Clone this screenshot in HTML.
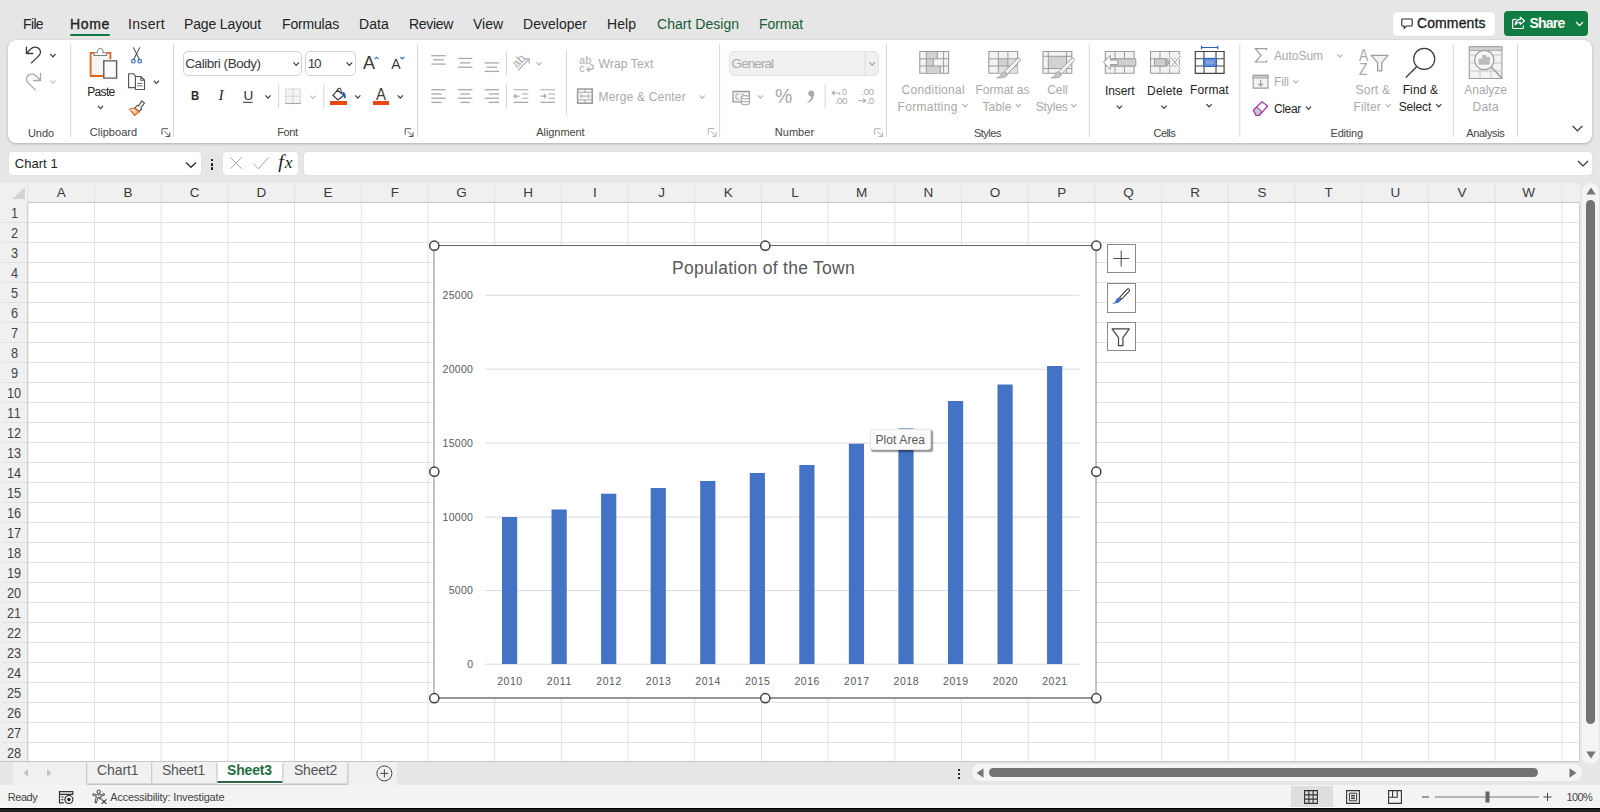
<!DOCTYPE html>
<html><head><meta charset="utf-8"><title>Excel</title>
<style>
html,body{margin:0;padding:0}
body{width:1600px;height:812px;background:#e6e6e6;position:relative;overflow:hidden;font-family:"Liberation Sans",sans-serif;}
.t{position:absolute;white-space:nowrap;}
.b{position:absolute;box-sizing:border-box;}
svg{overflow:visible}
</style></head><body>

<div class="t" style="left:23.00px;top:15.90px;font-size:14px;line-height:17px;color:#242424;letter-spacing:-0.639px;">File</div>
<div class="t" style="left:70.00px;top:15.90px;font-size:14px;line-height:17px;color:#242424;letter-spacing:0.664px;-webkit-text-stroke:0.35px #242424;">Home</div>
<div class="t" style="left:128.00px;top:15.90px;font-size:14px;line-height:17px;color:#242424;letter-spacing:0.332px;">Insert</div>
<div class="t" style="left:184.00px;top:15.90px;font-size:14px;line-height:17px;color:#242424;letter-spacing:-0.147px;">Page Layout</div>
<div class="t" style="left:282.00px;top:15.90px;font-size:14px;line-height:17px;color:#242424;letter-spacing:-0.168px;">Formulas</div>
<div class="t" style="left:359.00px;top:15.90px;font-size:14px;line-height:17px;color:#242424;letter-spacing:0.107px;">Data</div>
<div class="t" style="left:409.00px;top:15.90px;font-size:14px;line-height:17px;color:#242424;letter-spacing:-0.317px;">Review</div>
<div class="t" style="left:473.00px;top:15.90px;font-size:14px;line-height:17px;color:#242424;letter-spacing:-0.023px;">View</div>
<div class="t" style="left:523.00px;top:15.90px;font-size:14px;line-height:17px;color:#242424;letter-spacing:0.021px;">Developer</div>
<div class="t" style="left:607.00px;top:15.90px;font-size:14px;line-height:17px;color:#242424;letter-spacing:0.052px;">Help</div>
<div class="t" style="left:657.00px;top:15.90px;font-size:14px;line-height:17px;color:#185c37;letter-spacing:0.025px;">Chart Design</div>
<div class="t" style="left:759.00px;top:15.90px;font-size:14px;line-height:17px;color:#185c37;letter-spacing:-0.056px;">Format</div>
<div class="b" style="left:70px;top:34.3px;width:40px;height:2px;background:#107c41;border-radius:1px;"></div>
<div class="b" style="left:1392.5px;top:11.5px;width:102.5px;height:24px;background:#fff;border-radius:4px;box-shadow:0 0 0 0.5px #d8d8d8;"></div>
<svg class="b" style="left:1400.5px;top:17.5px;" width="14" height="13" viewBox="0 0 14 13" fill="none"><path d="M1.600 1h8.800a.8.8 0 0 1 .8.8v5.400a.8.8 0 0 1-.8.8H5.600L3.200 10.300V8H1.600a.8.8 0 0 1-.8-.8V1.800a.8.8 0 0 1 .8-.8z" stroke="#242424" stroke-width="1.1"/></svg>
<div class="t" style="left:1417.00px;top:14.80px;font-size:14px;line-height:17px;color:#1a1a1a;letter-spacing:0.103px;-webkit-text-stroke:0.3px #1a1a1a;">Comments</div>
<div class="b" style="left:1504px;top:11px;width:84.2px;height:25px;background:#107c41;border-radius:4px;"></div>
<svg class="b" style="left:1510.5px;top:16px;" width="15" height="14" viewBox="0 0 15 14" fill="none"><path d="M5.2 3.4H2.9a1.3 1.3 0 0 0-1.3 1.3v6.5a1.3 1.3 0 0 0 1.3 1.3h8.2a1.3 1.3 0 0 0 1.3-1.3V9.6" stroke="#fff" stroke-width="1.2"/><path d="M9.3 1.2l4.2 3.6-4.2 3.6V6.3C6.6 6.2 5 7.2 4.2 9c.1-3 1.9-5.300 5.100-5.600z" stroke="#fff" stroke-width="1.2" stroke-linejoin="round"/></svg>
<div class="t" style="left:1529.50px;top:15.00px;font-size:14px;line-height:17px;color:#fff;letter-spacing:-0.782px;font-weight:bold;">Share</div>
<svg class="b" style="left:1575px;top:20.5px;" width="9" height="6" viewBox="0 0 9 6" fill="none"><path d="M1 1l3.5 3.5L8 1" stroke="#fff" stroke-width="1.3"/></svg>
<div class="b" style="left:8px;top:39.5px;width:1584px;height:103px;background:#fff;border-radius:8px;box-shadow:0 1px 3px rgba(0,0,0,0.22),0 0 1px rgba(0,0,0,0.15);"></div>
<div class="t" style="left:28.00px;top:126.50px;font-size:11px;line-height:13px;color:#444;letter-spacing:-0.074px;">Undo</div>
<div class="t" style="left:87.30px;top:84.80px;font-size:12px;line-height:14px;color:#242424;letter-spacing:-0.697px;">Paste</div>
<div class="t" style="left:89.80px;top:126.20px;font-size:11px;line-height:13px;color:#444;letter-spacing:0.024px;">Clipboard</div>
<div class="b" style="left:182.8px;top:51.3px;width:119.5px;height:24.3px;border:1px solid #d1d1d1;border-radius:5px;background:#fff;"></div>
<div class="t" style="left:185.30px;top:55.80px;font-size:13.5px;line-height:16px;color:#3a3a3a;letter-spacing:-0.462px;">Calibri (Body)</div>
<div class="b" style="left:304.7px;top:51.3px;width:51.1px;height:24.3px;border:1px solid #d1d1d1;border-radius:5px;background:#fff;"></div>
<div class="t" style="left:307.80px;top:55.80px;font-size:13.5px;line-height:16px;color:#3a3a3a;letter-spacing:-1.257px;">10</div>
<div class="t" style="left:363.00px;top:51.60px;font-size:18px;line-height:22px;color:#3a3a3a;">A</div>
<div class="t" style="left:391.30px;top:55.50px;font-size:14px;line-height:17px;color:#3a3a3a;">A</div>
<div class="t" style="left:191.30px;top:87.60px;font-size:13.5px;line-height:16px;color:#2a2a2a;font-weight:bold;transform:scaleX(0.84);transform-origin:0 50%;">B</div>
<div class="t" style="left:218.50px;top:85.00px;font-size:15.5px;line-height:19px;color:#2a2a2a;"><span style="font-family:'Liberation Serif',serif;font-style:italic;">I</span></div>
<div class="t" style="left:243.60px;top:87.60px;font-size:13.5px;line-height:16px;color:#2a2a2a;">U</div>
<div class="b" style="left:330.3px;top:101px;width:16.3px;height:3.5px;background:#e8470e;"></div>
<div class="t" style="left:376.00px;top:84.50px;font-size:15.8px;line-height:19px;color:#3a3a3a;transform:scaleX(0.95);transform-origin:0 50%;">A</div>
<div class="b" style="left:372.7px;top:101px;width:16.3px;height:3.5px;background:#e8470e;"></div>
<div class="t" style="left:277.30px;top:126.00px;font-size:11px;line-height:13px;color:#444;letter-spacing:-0.402px;">Font</div>
<div class="t" style="left:511.80px;top:53.60px;font-size:12px;line-height:14px;color:#a9a9a9;transform:rotate(-45deg);transform-origin:50% 50%;">ab</div>
<div class="t" style="left:579.30px;top:53.50px;font-size:10.5px;line-height:13px;color:#a9a9a9;letter-spacing:0.411px;">ab</div>
<div class="t" style="left:579.30px;top:61.90px;font-size:10.5px;line-height:13px;color:#a9a9a9;">c</div>
<div class="t" style="left:598.50px;top:57.00px;font-size:12px;line-height:14px;color:#a9a9a9;letter-spacing:0.147px;">Wrap Text</div>
<div class="t" style="left:598.50px;top:90.20px;font-size:12px;line-height:14px;color:#a9a9a9;letter-spacing:0.193px;">Merge &amp; Center</div>
<div class="t" style="left:536.30px;top:126.00px;font-size:11px;line-height:13px;color:#444;letter-spacing:-0.068px;">Alignment</div>
<div class="b" style="left:728.8px;top:51.2px;width:150.3px;height:24.5px;border:1px solid #e3e3e3;border-radius:5px;background:#f0f0f0;"></div>
<div class="t" style="left:731.60px;top:55.80px;font-size:13.5px;line-height:16px;color:#a9a9a9;letter-spacing:-0.918px;">General</div>
<div class="t" style="left:775.00px;top:84.80px;font-size:19.5px;line-height:23px;color:#a9a9a9;">%</div>
<div class="t" style="left:842.30px;top:86.00px;font-size:9.8px;line-height:12px;color:#a9a9a9;transform:scaleX(0.9);transform-origin:0 50%;">0</div>
<div class="t" style="left:834.70px;top:94.60px;font-size:9.8px;line-height:12px;color:#a9a9a9;letter-spacing:-0.441px;">.00</div>
<div class="t" style="left:861.30px;top:86.00px;font-size:9.8px;line-height:12px;color:#a9a9a9;letter-spacing:-0.441px;">.00</div>
<div class="t" style="left:866.60px;top:94.60px;font-size:9.8px;line-height:12px;color:#a9a9a9;letter-spacing:-0.586px;">.0</div>
<div class="t" style="left:774.80px;top:126.00px;font-size:11px;line-height:13px;color:#444;letter-spacing:0.030px;">Number</div>
<div class="t" style="left:901.50px;top:82.70px;font-size:12px;line-height:14px;color:#a9a9a9;letter-spacing:0.324px;">Conditional</div>
<div class="t" style="left:897.60px;top:99.50px;font-size:12px;line-height:14px;color:#a9a9a9;letter-spacing:0.275px;">Formatting</div>
<div class="t" style="left:975.50px;top:82.70px;font-size:12px;line-height:14px;color:#a9a9a9;letter-spacing:-0.012px;">Format as</div>
<div class="t" style="left:982.50px;top:99.50px;font-size:12px;line-height:14px;color:#a9a9a9;letter-spacing:0.043px;">Table</div>
<div class="t" style="left:1047.20px;top:82.70px;font-size:12px;line-height:14px;color:#a9a9a9;letter-spacing:-0.068px;">Cell</div>
<div class="t" style="left:1035.70px;top:99.50px;font-size:12px;line-height:14px;color:#a9a9a9;letter-spacing:-0.130px;">Styles</div>
<div class="t" style="left:973.90px;top:126.50px;font-size:11px;line-height:13px;color:#444;letter-spacing:-0.476px;">Styles</div>
<div class="t" style="left:1105.00px;top:84.40px;font-size:12px;line-height:14px;color:#242424;letter-spacing:-0.102px;">Insert</div>
<div class="t" style="left:1147.10px;top:84.40px;font-size:12px;line-height:14px;color:#242424;letter-spacing:0.202px;">Delete</div>
<div class="t" style="left:1190.10px;top:82.70px;font-size:12px;line-height:14px;color:#242424;letter-spacing:0.117px;">Format</div>
<div class="t" style="left:1153.60px;top:126.50px;font-size:11px;line-height:13px;color:#444;letter-spacing:-0.590px;">Cells</div>
<div class="t" style="left:1273.90px;top:48.70px;font-size:12px;line-height:14px;color:#a9a9a9;letter-spacing:-0.022px;">AutoSum</div>
<div class="t" style="left:1273.90px;top:75.30px;font-size:12px;line-height:14px;color:#a9a9a9;letter-spacing:-0.082px;">Fill</div>
<div class="t" style="left:1273.90px;top:101.70px;font-size:12px;line-height:14px;color:#242424;letter-spacing:-0.335px;">Clear</div>
<div class="t" style="left:1358.90px;top:45.70px;font-size:15.8px;line-height:19px;color:#a8a8a8;transform:scaleX(0.88);transform-origin:0 50%;">A</div>
<div class="t" style="left:1359.20px;top:60.40px;font-size:15.8px;line-height:19px;color:#a8a8a8;transform:scaleX(0.88);transform-origin:0 50%;">Z</div>
<div class="t" style="left:1355.50px;top:82.70px;font-size:12px;line-height:14px;color:#a9a9a9;letter-spacing:0.226px;">Sort &amp;</div>
<div class="t" style="left:1353.60px;top:99.50px;font-size:12px;line-height:14px;color:#a9a9a9;letter-spacing:0.106px;">Filter</div>
<div class="t" style="left:1402.70px;top:82.70px;font-size:12px;line-height:14px;color:#242424;letter-spacing:0.103px;">Find &amp;</div>
<div class="t" style="left:1398.70px;top:99.50px;font-size:12px;line-height:14px;color:#242424;letter-spacing:-0.158px;">Select</div>
<div class="t" style="left:1330.50px;top:126.50px;font-size:11px;line-height:13px;color:#444;letter-spacing:-0.176px;">Editing</div>
<div class="t" style="left:1464.30px;top:82.70px;font-size:12px;line-height:14px;color:#a9a9a9;letter-spacing:0.001px;">Analyze</div>
<div class="t" style="left:1472.50px;top:99.50px;font-size:12px;line-height:14px;color:#a9a9a9;letter-spacing:0.238px;">Data</div>
<div class="t" style="left:1466.30px;top:126.50px;font-size:11px;line-height:13px;color:#444;letter-spacing:-0.345px;">Analysis</div>
<svg class="b" style="left:0px;top:0px;" width="1600" height="812" viewBox="0 0 1600 812" fill="none"><path d="M70.6 44.5V137" stroke="#d6d6d6" stroke-width="1" fill="none" /><path d="M173.5 44.5V137" stroke="#d6d6d6" stroke-width="1" fill="none" /><path d="M417.6 44.5V137" stroke="#d6d6d6" stroke-width="1" fill="none" /><path d="M719.6 44.5V137" stroke="#d6d6d6" stroke-width="1" fill="none" /><path d="M886.5 44.5V137" stroke="#d6d6d6" stroke-width="1" fill="none" /><path d="M1089.4 44.5V137" stroke="#d6d6d6" stroke-width="1" fill="none" /><path d="M1239.8 44.5V137" stroke="#d6d6d6" stroke-width="1" fill="none" /><path d="M1453.4 44.5V137" stroke="#d6d6d6" stroke-width="1" fill="none" /><path d="M1517.5 44.5V137" stroke="#d6d6d6" stroke-width="1" fill="none" /><path d="M26.400 47.200V53.500H32.800M26.600 53.300L30.500 49.300C32.500 47.300 35.600 46.600 38 47.900C40.600 49.300 41.200 52.600 39.600 54.900C38.800 56 36 58.600 31.600 62.800" stroke="#3a3a3a" stroke-width="1.3" fill="none" stroke-linecap="round" stroke-linejoin="round"/><path d="M50.30 54.00L52.90 56.80L55.50 54.00" stroke="#3a3a3a" stroke-width="1.15" fill="none" /><path d="M40.500 73.500V80.500H33.600M40.300 80.300L36.400 76.300C34.400 74.300 31.300 73.600 28.900 74.900C26.300 76.300 25.700 79.600 27.300 81.900C28.100 83 30.900 85.600 35.300 89.800" stroke="#a8a8a8" stroke-width="1.3" fill="none" stroke-linecap="round" stroke-linejoin="round"/><path d="M50.30 80.40L52.90 83.20L55.50 80.40" stroke="#c4c4c4" stroke-width="1.15" fill="none" /><path d="M90.600 53.200h19.600v22.700h-19.600z" stroke="none" stroke-width="0" fill="#f5f5f5" /><path d="M94 52.900h-3.400v23.100h12.400" stroke="#e8641b" stroke-width="1.8" fill="none" /><path d="M107 52.900h3.400v6.300" stroke="#e8641b" stroke-width="1.8" fill="none" /><path d="M94 55.500v-2.700h3.400c0-2.300 1.200-4.500 2.900-4.500s2.900 2.200 2.900 4.500h3.400v2.700z" stroke="#808080" stroke-width="1.1" fill="#fff" /><path d="M103.800 60.900h12.800v17.200h-12.800z" stroke="#5a5a5a" stroke-width="1.4" fill="#fafafa" /><path d="M97.90 105.80L100.50 108.60L103.10 105.80" stroke="#3a3a3a" stroke-width="1.15" fill="none" /><path d="M133.300 47.300l6 12M139.800 47.300l-6 12" stroke="#3a3a3a" stroke-width="1" fill="none" /><circle cx="133.400" cy="61.200" r="1.800" stroke="#3366cc" stroke-width="1.2" fill="none"/><circle cx="139.700" cy="61.200" r="1.800" stroke="#3366cc" stroke-width="1.2" fill="none"/><path d="M135 87.600h-6.400v-13.800h5l2 2" stroke="#555" stroke-width="1.15" fill="none" /><path d="M135.400 76.500h5.500l3.600 3.600v9.400h-9.100zM140.800 76.600v3.600h3.600" stroke="#555" stroke-width="1.15" fill="#fff" /><path d="M137.300 83.400h5.200M137.300 85.800h5.200" stroke="#555" stroke-width="0.9" fill="none" /><path d="M153.80 80.70L156.40 83.50L159.00 80.70" stroke="#3a3a3a" stroke-width="1.15" fill="none" /><path d="M141.800 100.900l2.700 2.300-3.700 4.500 .9 1.300-2.600 2.700-4.300-3.700 2.500-2.700 1.300.600z" stroke="#4d4d4d" stroke-width="1.1" fill="#fff" stroke-linejoin="round"/><path d="M134.600 108.200l4.400 3.800-4.400 3.300-5-6.200z" stroke="#e8641b" stroke-width="1.2" fill="#f0c9a0" stroke-linejoin="round"/><path d="M130.500 109.400c1.500 1 3 .2 4.500 1.300" stroke="#fff" stroke-width="1" fill="none" /><path d="M162 134.7V128.7H168" stroke="#555" stroke-width="1" fill="none" /><path d="M164.6 131.29999999999998L169.6 136.29999999999998M169.8 132.29999999999998V136.5H165.6" stroke="#555" stroke-width="1" fill="none" /><path d="M293.40 62.40L296.20 65.40L299.00 62.40" stroke="#3a3a3a" stroke-width="1.15" fill="none" /><path d="M346.60 62.40L349.40 65.40L352.20 62.40" stroke="#3a3a3a" stroke-width="1.15" fill="none" /><path d="M374.700 59.200l1.900-2 1.900 2" stroke="#2b6fc9" stroke-width="1.1" fill="none" /><path d="M400.500 57l1.900 2 1.900-2" stroke="#2b6fc9" stroke-width="1.1" fill="none" /><path d="M243.200 102.300h9.400" stroke="#2a2a2a" stroke-width="1" fill="none" /><path d="M265.40 95.30L268.00 98.10L270.60 95.30" stroke="#3a3a3a" stroke-width="1.15" fill="none" /><path d="M278.600 84.500v24.300M323.800 84.500v24.300M506.400 51.300v24.300M506.400 84.300v24.700M566.500 50.500v64.500M825.200 84.500v24.300" stroke="#d6d6d6" stroke-width="1" fill="none" /><path d="M285.700 88.900h14.600v14.600H285.700z" stroke="#b4b4b4" stroke-width="1" fill="#f5f5f5" stroke-dasharray="1 1"/><path d="M285.200 103.500h15.600" stroke="#a8a8a8" stroke-width="1.1" fill="none" /><path d="M293 88.900v14.600M285.700 96.200h14.600" stroke="#c0c0c0" stroke-width="1" fill="none" stroke-dasharray="1.5 1"/><path d="M310.40 95.60L313.00 98.40L315.60 95.60" stroke="#c0c0c0" stroke-width="1.15" fill="none" /><path d="M337.300 90.300L344 95.300L337.800 99.900L332.900 95.300Z" stroke="#3a3a3a" stroke-width="1.2" fill="#fff" stroke-linejoin="round"/><path d="M337.100 91.800C336.900 89.300 338.300 88.100 339.500 88.300C341 88.600 341.200 90.500 341.200 93" stroke="#3a3a3a" stroke-width="1.1" fill="none" /><path d="M342.500 92.300C344.600 92.900 345 95.400 344.800 98.100" stroke="#1a5fd0" stroke-width="1.9" fill="none" /><path d="M355.20 95.30L357.80 98.10L360.40 95.30" stroke="#3a3a3a" stroke-width="1.15" fill="none" /><path d="M397.70 95.30L400.30 98.10L402.90 95.30" stroke="#3a3a3a" stroke-width="1.15" fill="none" /><path d="M405.2 134.7V128.7H411.2" stroke="#555" stroke-width="1" fill="none" /><path d="M407.8 131.29999999999998L412.8 136.29999999999998M413.0 132.29999999999998V136.5H408.8" stroke="#555" stroke-width="1" fill="none" /><path d="M431.30 55.7h14.4" stroke="#a9a9a9" stroke-width="1.3" fill="none" /><path d="M433.20 59.8h10.6" stroke="#a9a9a9" stroke-width="1.3" fill="none" /><path d="M431.30 64.1h14.4" stroke="#a9a9a9" stroke-width="1.3" fill="none" /><path d="M458.00 58.4h14.4" stroke="#a9a9a9" stroke-width="1.3" fill="none" /><path d="M459.90 62.9h10.6" stroke="#a9a9a9" stroke-width="1.3" fill="none" /><path d="M458.00 67.2h14.4" stroke="#a9a9a9" stroke-width="1.3" fill="none" /><path d="M484.70 62.9h14.4" stroke="#a9a9a9" stroke-width="1.3" fill="none" /><path d="M486.60 67.2h10.6" stroke="#a9a9a9" stroke-width="1.3" fill="none" /><path d="M484.70 71.4h14.4" stroke="#a9a9a9" stroke-width="1.3" fill="none" /><path d="M431.30 89.7h14.4" stroke="#a9a9a9" stroke-width="1.3" fill="none" /><path d="M431.30 94h10.4" stroke="#a9a9a9" stroke-width="1.3" fill="none" /><path d="M431.30 98.2h14.4" stroke="#a9a9a9" stroke-width="1.3" fill="none" /><path d="M431.30 102.4h10.4" stroke="#a9a9a9" stroke-width="1.3" fill="none" /><path d="M458.00 89.7h14.4" stroke="#a9a9a9" stroke-width="1.3" fill="none" /><path d="M460.50 94h9.4" stroke="#a9a9a9" stroke-width="1.3" fill="none" /><path d="M458.00 98.2h14.4" stroke="#a9a9a9" stroke-width="1.3" fill="none" /><path d="M460.50 102.4h9.4" stroke="#a9a9a9" stroke-width="1.3" fill="none" /><path d="M484.70 89.7h14.4" stroke="#a9a9a9" stroke-width="1.3" fill="none" /><path d="M488.70 94h10.4" stroke="#a9a9a9" stroke-width="1.3" fill="none" /><path d="M484.70 98.2h14.4" stroke="#a9a9a9" stroke-width="1.3" fill="none" /><path d="M488.70 102.4h10.4" stroke="#a9a9a9" stroke-width="1.3" fill="none" /><path d="M518 70.300l11-11.200M524.600 58.900h4.600v4.600" stroke="#a9a9a9" stroke-width="1.1" fill="none" /><path d="M536.40 62.10L539.00 64.90L541.60 62.10" stroke="#b8b8b8" stroke-width="1.15" fill="none" /><path d="M513.800 89.700h14.600M513.800 102.400h14.600M521.800 94h6.600M521.800 98.200h6.600" stroke="#a9a9a9" stroke-width="1.1" fill="none" /><path d="M519.400 96.100h-5.400M516.300 93.800l-2.400 2.300 2.400 2.300" stroke="#a9a9a9" stroke-width="1.1" fill="none" /><path d="M540.400 89.700h14.600M540.400 102.400h14.600M548.400 94h6.600M548.400 98.200h6.600" stroke="#a9a9a9" stroke-width="1.1" fill="none" /><path d="M540.600 96.100h5.400M543.700 93.800l2.400 2.300-2.400 2.300" stroke="#a9a9a9" stroke-width="1.1" fill="none" /><path d="M587.200 69.400h3.800a2.300 2.300 0 0 0 0-4.600h-1M589.400 67.200l-2.300 2.200 2.300 2.200" stroke="#a9a9a9" stroke-width="1.1" fill="none" /><path d="M577.600 88.900h14.600v14.400H577.600z" stroke="#9a9a9a" stroke-width="1.5" fill="#f7f7f7" /><path d="M577.600 92.300h14.600M577.600 99.900h14.600M584.900 88.900v3.400M584.900 99.900v3.400" stroke="#a9a9a9" stroke-width="1" fill="none" /><path d="M580 96.100h9.800M582 94.300l-1.900 1.800 1.900 1.800M587.800 94.300l1.900 1.800-1.900 1.800" stroke="#a9a9a9" stroke-width="1" fill="none" /><path d="M699.60 95.50L702.20 98.30L704.80 95.50" stroke="#b8b8b8" stroke-width="1.15" fill="none" /><path d="M708.3 134.5V128.5H714.3" stroke="#b4b4b4" stroke-width="1" fill="none" /><path d="M710.9 131.1L715.9 136.1M716.0999999999999 132.1V136.3H711.9" stroke="#b4b4b4" stroke-width="1" fill="none" /><path d="M865.200 52v23" stroke="#dcdcdc" stroke-width="1" fill="none" /><path d="M869.40 62.20L872.20 65.20L875.00 62.20" stroke="#a0a0a0" stroke-width="1.15" fill="none" /><path d="M733 91.500h16.300v10.300h-16.300z" stroke="#9c9c9c" stroke-width="1.3" fill="#f6f6f6" /><path d="M739.300 94h-1.800a1.500 1.500 0 0 0-1.500 1.500v2.200a1.500 1.500 0 0 0 1.500 1.500h1.800M741.500 94.200h2.600" stroke="#a9a9a9" stroke-width="1.1" fill="none" /><path d="M741.300 97.400v5.600c0 .900 1.800 1.700 4.100 1.700s4.100-.800 4.100-1.700v-5.600z" stroke="none" stroke-width="0" fill="#fff" /><ellipse cx="745.400" cy="97.300" rx="4.100" ry="1.700" stroke="#a9a9a9" stroke-width="1.100" fill="#fff"/><path d="M741.300 97.300v5.700c0 .900 1.800 1.700 4.100 1.700s4.100-.800 4.100-1.700v-5.700M741.300 100.200c0 .900 1.800 1.700 4.100 1.700s4.100-.800 4.100-1.700" stroke="#a9a9a9" stroke-width="1.1" fill="none" /><path d="M757.90 95.40L760.50 98.20L763.10 95.40" stroke="#b8b8b8" stroke-width="1.15" fill="none" /><circle cx="811.200" cy="93.500" r="2.900" fill="#a9a9a9"/><path d="M814.100 93.500C814.100 98 811.600 101.500 807.700 103L807.300 102.300C809.900 100.800 811.100 98.600 811.200 96.300Z" stroke="none" stroke-width="0" fill="#a9a9a9" /><path d="M839.800 95v-2h-7.600M834.500 90.800l-2.400 2.200 2.400 2.200" stroke="#a9a9a9" stroke-width="1.1" fill="none" /><path d="M858 100.700h7.600M863.200 98.500l2.400 2.200-2.400 2.200" stroke="#a9a9a9" stroke-width="1.1" fill="none" /><path d="M874.7 134.7V128.7H880.7" stroke="#b4b4b4" stroke-width="1" fill="none" /><path d="M877.3000000000001 131.29999999999998L882.3000000000001 136.29999999999998M882.5 132.29999999999998V136.5H878.3000000000001" stroke="#b4b4b4" stroke-width="1" fill="none" /><path d="M919.800 51.500h28.800v21.800h-28.800z" stroke="#9c9c9c" stroke-width="1.1" fill="#f3f3f3" /><path d="M926.300 52h11v7h-11zM926.300 59h7v7h-7zM926.300 66h14v7h-14z" stroke="none" stroke-width="0" fill="#d2d2d2" /><path d="M926.300 51.500v21.800M919.800 58.800h28.800M919.800 66h28.800M937.300 51.500v7.300M933.300 58.800v7.200M940.300 66v7.300M943.600 51.500v21.800" stroke="#9c9c9c" stroke-width="1" fill="none" /><path d="M962.50 104.20L965.10 107.00L967.70 104.20" stroke="#b0b0b0" stroke-width="1.15" fill="none" /><path d="M988.800 51.500h28.800v21.800h-28.800z" stroke="#9c9c9c" stroke-width="1.1" fill="#f3f3f3" /><path d="M998.300 58.800h19.300v14.500h-19.300z" stroke="none" stroke-width="0" fill="#dedede" /><path d="M998.300 58.800h9.600v7.200h-9.600z" stroke="none" stroke-width="0" fill="#d2d2d2" /><path d="M988.800 58.800h28.800M988.800 66h28.800M998.300 51.500v21.800M1007.900 51.500v21.800" stroke="#9c9c9c" stroke-width="1" fill="none" /><path d="M1019.6 58.400c.9.600 1 1.600.400 2.400L1007.4 74l-2.800-2.400L1017.2 58.700c.700-.700 1.600-.800 2.400-.300z" stroke="#9c9c9c" stroke-width="1" fill="#f4f4f4" stroke-linejoin="round"/><path d="M1004.2 71.900l3.100 2.600c-.200 2.200-3.600 3.900-10.800 3.400 2.600-.800 3.600-2 4.300-3.400.800-1.600 1.900-2.700 3.400-2.600z" stroke="#a4a4a4" stroke-width="0.8" fill="#c4c4c4" stroke-linejoin="round"/><path d="M1015.70 104.20L1018.30 107.00L1020.90 104.20" stroke="#b0b0b0" stroke-width="1.15" fill="none" /><path d="M1043 51.500h28.800v21.800h-28.800z" stroke="#9c9c9c" stroke-width="1.1" fill="#f3f3f3" /><path d="M1048.300 56.300h18.300v12.200h-18.300z" stroke="none" stroke-width="0" fill="#d2d2d2" /><path d="M1043 56.300h28.800M1043 68.500h28.800M1048.300 51.500v21.800M1066.600 51.500v21.800" stroke="#9c9c9c" stroke-width="1" fill="none" /><path d="M1073.8 58.400c.9.600 1 1.600.400 2.400L1061.6 74l-2.800-2.400L1071.4 58.700c.700-.700 1.600-.800 2.400-.300z" stroke="#9c9c9c" stroke-width="1" fill="#f4f4f4" stroke-linejoin="round"/><path d="M1058.4 71.900l3.100 2.600c-.200 2.200-3.600 3.900-10.800 3.400 2.600-.800 3.600-2 4.300-3.400.800-1.600 1.900-2.700 3.400-2.600z" stroke="#a4a4a4" stroke-width="0.8" fill="#c4c4c4" stroke-linejoin="round"/><path d="M1071.20 104.20L1073.80 107.00L1076.40 104.20" stroke="#b0b0b0" stroke-width="1.15" fill="none" /><path d="M1105.300 51.500h28.800v21.800h-28.800z" stroke="#9c9c9c" stroke-width="1.1" fill="#f3f3f3" /><path d="M1105.300 58.800h28.800M1105.300 66h28.800M1115 51.500v21.800M1124.500 51.500v21.800" stroke="#9c9c9c" stroke-width="1" fill="none" /><path d="M1112 58.800h23.800v7.200h-23.800z" stroke="#9c9c9c" stroke-width="1" fill="#cfcfcf" /><path d="M1110.400 55.300l-6.900 7 6.900 7v-4.800h7.400v-4.400h-7.400z" stroke="#9c9c9c" stroke-width="1" fill="#fafafa" stroke-linejoin="round"/><path d="M1116.80 105.70L1119.40 108.50L1122.00 105.70" stroke="#3a3a3a" stroke-width="1.15" fill="none" /><path d="M1150.500 51.500h28.800v21.800h-28.800z" stroke="#9c9c9c" stroke-width="1.1" fill="#f3f3f3" /><path d="M1150.500 58.800h28.800M1150.500 66h28.800M1160 51.500v21.800M1169.600 51.500v21.800" stroke="#9c9c9c" stroke-width="1" fill="none" /><path d="M1154.500 58.800h11.500v7.200h-11.500z" stroke="#9c9c9c" stroke-width="1" fill="#cfcfcf" /><path d="M1166 59.300l4 3.100-4 3.100z" stroke="#9c9c9c" stroke-width="1" fill="#bdbdbd" /><path d="M1169 55.600l11.600 13.400M1180.600 55.600l-11.600 13.400" stroke="#fff" stroke-width="3.2" fill="none" /><path d="M1169 55.600l11.600 13.400M1180.600 55.600l-11.600 13.400" stroke="#b0b0b0" stroke-width="1.1" fill="none" /><path d="M1161.40 105.70L1164.00 108.50L1166.60 105.70" stroke="#3a3a3a" stroke-width="1.15" fill="none" /><path d="M1195.300 51.500h28.800v21.800h-28.800z" stroke="#444" stroke-width="1.2" fill="#fff" /><path d="M1195.300 58.800h28.800M1195.300 66h28.800M1204 51.500v21.800M1216 51.500v21.800" stroke="#444" stroke-width="1.1" fill="none" /><path d="M1203.500 58.300h13v8.200h-13z" stroke="#2f62b5" stroke-width="1" fill="#5b8bd8" /><path d="M1206.500 61h7v2.800h-7z" stroke="#8fb0e6" stroke-width="0.8" fill="#7ea3e0" /><path d="M1201.500 47.500h16.300M1201.500 45.800v3.400M1217.800 45.800v3.400" stroke="#2b5fc0" stroke-width="1.2" fill="none" /><path d="M1206.50 104.20L1209.10 107.00L1211.70 104.20" stroke="#3a3a3a" stroke-width="1.15" fill="none" /><path d="M1266.600 50.300v-1.700h-11.200l5.700 6.700-5.700 6.700h11.200v-1.700" stroke="#9c9c9c" stroke-width="1.2" fill="none" stroke-linejoin="miter"/><path d="M1337.20 54.40L1339.80 57.20L1342.40 54.40" stroke="#b8b8b8" stroke-width="1.15" fill="none" /><path d="M1253.200 75.300h14.800v12.800h-14.800z" stroke="#9c9c9c" stroke-width="1.1" fill="#f3f3f3" /><path d="M1253.200 75.300h14.800v2.600h-14.800z" stroke="#9c9c9c" stroke-width="1" fill="#d2d2d2" /><path d="M1260.600 79.800v6M1258.200 83.600l2.400 2.400 2.400-2.400" stroke="#9c9c9c" stroke-width="1.1" fill="none" /><path d="M1293.20 80.40L1295.80 83.20L1298.40 80.40" stroke="#b8b8b8" stroke-width="1.15" fill="none" /><path d="M1253.400 110.200l8.600-8.500 5.700 4.300-8.300 9.400-3.300.1z" stroke="#a436ab" stroke-width="1.2" fill="#fff" stroke-linejoin="round"/><path d="M1253.400 110.200l3.200-3.100 5.400 4.500-3 3.400-2.900.2z" stroke="#a436ab" stroke-width="1.1" fill="#c9c9c9" stroke-linejoin="round"/><path d="M1305.90 106.60L1308.50 109.40L1311.10 106.60" stroke="#3a3a3a" stroke-width="1.15" fill="none" /><path d="M1371.300 55.300h16.800l-6.300 7.300v8.200h-4.200v-8.200z" stroke="#9c9c9c" stroke-width="1.2" fill="#f3f3f3" stroke-linejoin="round"/><path d="M1385.70 104.20L1388.30 107.00L1390.90 104.20" stroke="#b8b8b8" stroke-width="1.15" fill="none" /><circle cx="1424.200" cy="58.900" r="10.500" stroke="#3a3a3a" stroke-width="1.200" fill="none"/><path d="M1416.600 66.700l-10.800 10.800" stroke="#3a3a3a" stroke-width="1.3" fill="none" /><path d="M1436.10 104.20L1438.70 107.00L1441.30 104.20" stroke="#3a3a3a" stroke-width="1.15" fill="none" /><path d="M1469.300 46.800h32.600v31.700h-32.600z" stroke="#9c9c9c" stroke-width="1.1" fill="#f3f3f3" /><path d="M1469.300 46.800h32.600v3.600h-32.600z" stroke="#9c9c9c" stroke-width="0.8" fill="#d2d2d2" /><path d="M1469.300 55h32.600M1469.300 63h32.600M1469.300 71h32.600M1480 50.400v28.100M1491 50.400v28.100" stroke="#c8c8c8" stroke-width="1" fill="none" /><circle cx="1484.300" cy="60" r="9.700" stroke="#9c9c9c" stroke-width="1.200" fill="#f6f6f6"/><path d="M1479 64.300v-5.300h3.300v5.300zM1482.600 64.300v-9h3.300v9zM1486.200 64.300v-7h3.300v7z" stroke="#b0b0b0" stroke-width="0.6" fill="#bdbdbd" /><path d="M1491.400 67l10.500 11.300" stroke="#9c9c9c" stroke-width="1.4" fill="none" /><path d="M1572.75 126.00L1577.50 130.80L1582.25 126.00" stroke="#3a3a3a" stroke-width="1.2" fill="none" /></svg>
<div class="b" style="left:9px;top:152px;width:192px;height:23px;background:#fff;border-radius:4px;box-shadow:0 0 0 0.5px #dedede;"></div>
<div class="t" style="left:14.70px;top:155.80px;font-size:13px;line-height:16px;color:#242424;letter-spacing:0.053px;">Chart 1</div>
<svg class="b" style="left:184.8px;top:161.4px;" width="12" height="7" viewBox="0 0 12 7" fill="none"><path d="M1 1.500l5 4.800 5-4.800" stroke="#2a2a2a" stroke-width="1.2"/></svg>
<div class="b" style="left:210.6px;top:158.60000000000002px;width:2.5px;height:2.5px;background:#1a1a1a;border-radius:0.6px;"></div>
<div class="b" style="left:210.6px;top:163.0px;width:2.5px;height:2.5px;background:#1a1a1a;border-radius:0.6px;"></div>
<div class="b" style="left:210.6px;top:167.4px;width:2.5px;height:2.5px;background:#1a1a1a;border-radius:0.6px;"></div>
<div class="b" style="left:223.3px;top:152px;width:75px;height:23px;background:#fff;border-radius:4px;box-shadow:0 0 0 0.5px #dedede;"></div>
<svg class="b" style="left:229.8px;top:157.2px;" width="12.2" height="12.2" viewBox="0 0 12.2 12.2" fill="none"><path d="M0.400 0.400l11.400 11.400M11.800 0.400L0.400 11.800" stroke="#a6a6a6" stroke-width="1"/></svg>
<svg class="b" style="left:253px;top:157px;" width="16" height="12" viewBox="0 0 16 12" fill="none"><path d="M0.400 6.800l5 5L15.600 0.400" stroke="#a6a6a6" stroke-width="1"/></svg>
<div class="t" style="left:278.30px;top:150.30px;font-size:19.5px;line-height:23px;color:#1a1a1a;"><span style="font-family:'Liberation Serif',serif;font-style:italic;">f</span><span style="font-family:'Liberation Serif',serif;font-style:italic;font-size:17.5px;margin-left:1px">x</span></div>
<div class="b" style="left:304px;top:152px;width:1287.5px;height:23px;background:#fff;border-radius:4px;box-shadow:0 0 0 0.5px #dedede;"></div>
<svg class="b" style="left:1577px;top:159.5px;" width="12" height="7" viewBox="0 0 12 7" fill="none"><path d="M1 1l5 5 5-5" stroke="#333" stroke-width="1.2"/></svg>
<div class="b" style="left:0px;top:182.5px;width:1579.5px;height:20px;background:#f0f0f0;"></div>
<div class="b" style="left:0px;top:182.5px;width:27.75px;height:579.0px;background:#f0f0f0;"></div>
<div class="b" style="left:27.75px;top:202.5px;width:1551.75px;height:559.0px;background:#fff;"></div>
<svg class="b" style="left:0px;top:0px;" width="1600" height="812" viewBox="0 0 1600 812" fill="none"><path d="M27.75 184V202.5" stroke="#e2e2e2" stroke-width="1"/><path d="M94.45 184V202.5" stroke="#e2e2e2" stroke-width="1"/><path d="M94.45 202.5V761.5" stroke="#e2e2e2" stroke-width="1"/><path d="M161.15 184V202.5" stroke="#e2e2e2" stroke-width="1"/><path d="M161.15 202.5V761.5" stroke="#e2e2e2" stroke-width="1"/><path d="M227.85 184V202.5" stroke="#e2e2e2" stroke-width="1"/><path d="M227.85 202.5V761.5" stroke="#e2e2e2" stroke-width="1"/><path d="M294.55 184V202.5" stroke="#e2e2e2" stroke-width="1"/><path d="M294.55 202.5V761.5" stroke="#e2e2e2" stroke-width="1"/><path d="M361.25 184V202.5" stroke="#e2e2e2" stroke-width="1"/><path d="M361.25 202.5V761.5" stroke="#e2e2e2" stroke-width="1"/><path d="M427.95 184V202.5" stroke="#e2e2e2" stroke-width="1"/><path d="M427.95 202.5V761.5" stroke="#e2e2e2" stroke-width="1"/><path d="M494.65 184V202.5" stroke="#e2e2e2" stroke-width="1"/><path d="M494.65 202.5V761.5" stroke="#e2e2e2" stroke-width="1"/><path d="M561.35 184V202.5" stroke="#e2e2e2" stroke-width="1"/><path d="M561.35 202.5V761.5" stroke="#e2e2e2" stroke-width="1"/><path d="M628.05 184V202.5" stroke="#e2e2e2" stroke-width="1"/><path d="M628.05 202.5V761.5" stroke="#e2e2e2" stroke-width="1"/><path d="M694.75 184V202.5" stroke="#e2e2e2" stroke-width="1"/><path d="M694.75 202.5V761.5" stroke="#e2e2e2" stroke-width="1"/><path d="M761.45 184V202.5" stroke="#e2e2e2" stroke-width="1"/><path d="M761.45 202.5V761.5" stroke="#e2e2e2" stroke-width="1"/><path d="M828.15 184V202.5" stroke="#e2e2e2" stroke-width="1"/><path d="M828.15 202.5V761.5" stroke="#e2e2e2" stroke-width="1"/><path d="M894.85 184V202.5" stroke="#e2e2e2" stroke-width="1"/><path d="M894.85 202.5V761.5" stroke="#e2e2e2" stroke-width="1"/><path d="M961.55 184V202.5" stroke="#e2e2e2" stroke-width="1"/><path d="M961.55 202.5V761.5" stroke="#e2e2e2" stroke-width="1"/><path d="M1028.25 184V202.5" stroke="#e2e2e2" stroke-width="1"/><path d="M1028.25 202.5V761.5" stroke="#e2e2e2" stroke-width="1"/><path d="M1094.95 184V202.5" stroke="#e2e2e2" stroke-width="1"/><path d="M1094.95 202.5V761.5" stroke="#e2e2e2" stroke-width="1"/><path d="M1161.65 184V202.5" stroke="#e2e2e2" stroke-width="1"/><path d="M1161.65 202.5V761.5" stroke="#e2e2e2" stroke-width="1"/><path d="M1228.35 184V202.5" stroke="#e2e2e2" stroke-width="1"/><path d="M1228.35 202.5V761.5" stroke="#e2e2e2" stroke-width="1"/><path d="M1295.05 184V202.5" stroke="#e2e2e2" stroke-width="1"/><path d="M1295.05 202.5V761.5" stroke="#e2e2e2" stroke-width="1"/><path d="M1361.75 184V202.5" stroke="#e2e2e2" stroke-width="1"/><path d="M1361.75 202.5V761.5" stroke="#e2e2e2" stroke-width="1"/><path d="M1428.45 184V202.5" stroke="#e2e2e2" stroke-width="1"/><path d="M1428.45 202.5V761.5" stroke="#e2e2e2" stroke-width="1"/><path d="M1495.15 184V202.5" stroke="#e2e2e2" stroke-width="1"/><path d="M1495.15 202.5V761.5" stroke="#e2e2e2" stroke-width="1"/><path d="M1561.85 184V202.5" stroke="#e2e2e2" stroke-width="1"/><path d="M1561.85 202.5V761.5" stroke="#e2e2e2" stroke-width="1"/><path d="M27.75 222.50H1579.5" stroke="#e2e2e2" stroke-width="1"/><path d="M2 222.50H27.75" stroke="#e2e2e2" stroke-width="1"/><path d="M27.75 242.50H1579.5" stroke="#e2e2e2" stroke-width="1"/><path d="M2 242.50H27.75" stroke="#e2e2e2" stroke-width="1"/><path d="M27.75 262.50H1579.5" stroke="#e2e2e2" stroke-width="1"/><path d="M2 262.50H27.75" stroke="#e2e2e2" stroke-width="1"/><path d="M27.75 282.50H1579.5" stroke="#e2e2e2" stroke-width="1"/><path d="M2 282.50H27.75" stroke="#e2e2e2" stroke-width="1"/><path d="M27.75 302.50H1579.5" stroke="#e2e2e2" stroke-width="1"/><path d="M2 302.50H27.75" stroke="#e2e2e2" stroke-width="1"/><path d="M27.75 322.50H1579.5" stroke="#e2e2e2" stroke-width="1"/><path d="M2 322.50H27.75" stroke="#e2e2e2" stroke-width="1"/><path d="M27.75 342.50H1579.5" stroke="#e2e2e2" stroke-width="1"/><path d="M2 342.50H27.75" stroke="#e2e2e2" stroke-width="1"/><path d="M27.75 362.50H1579.5" stroke="#e2e2e2" stroke-width="1"/><path d="M2 362.50H27.75" stroke="#e2e2e2" stroke-width="1"/><path d="M27.75 382.50H1579.5" stroke="#e2e2e2" stroke-width="1"/><path d="M2 382.50H27.75" stroke="#e2e2e2" stroke-width="1"/><path d="M27.75 402.50H1579.5" stroke="#e2e2e2" stroke-width="1"/><path d="M2 402.50H27.75" stroke="#e2e2e2" stroke-width="1"/><path d="M27.75 422.50H1579.5" stroke="#e2e2e2" stroke-width="1"/><path d="M2 422.50H27.75" stroke="#e2e2e2" stroke-width="1"/><path d="M27.75 442.50H1579.5" stroke="#e2e2e2" stroke-width="1"/><path d="M2 442.50H27.75" stroke="#e2e2e2" stroke-width="1"/><path d="M27.75 462.50H1579.5" stroke="#e2e2e2" stroke-width="1"/><path d="M2 462.50H27.75" stroke="#e2e2e2" stroke-width="1"/><path d="M27.75 482.50H1579.5" stroke="#e2e2e2" stroke-width="1"/><path d="M2 482.50H27.75" stroke="#e2e2e2" stroke-width="1"/><path d="M27.75 502.50H1579.5" stroke="#e2e2e2" stroke-width="1"/><path d="M2 502.50H27.75" stroke="#e2e2e2" stroke-width="1"/><path d="M27.75 522.50H1579.5" stroke="#e2e2e2" stroke-width="1"/><path d="M2 522.50H27.75" stroke="#e2e2e2" stroke-width="1"/><path d="M27.75 542.50H1579.5" stroke="#e2e2e2" stroke-width="1"/><path d="M2 542.50H27.75" stroke="#e2e2e2" stroke-width="1"/><path d="M27.75 562.50H1579.5" stroke="#e2e2e2" stroke-width="1"/><path d="M2 562.50H27.75" stroke="#e2e2e2" stroke-width="1"/><path d="M27.75 582.50H1579.5" stroke="#e2e2e2" stroke-width="1"/><path d="M2 582.50H27.75" stroke="#e2e2e2" stroke-width="1"/><path d="M27.75 602.50H1579.5" stroke="#e2e2e2" stroke-width="1"/><path d="M2 602.50H27.75" stroke="#e2e2e2" stroke-width="1"/><path d="M27.75 622.50H1579.5" stroke="#e2e2e2" stroke-width="1"/><path d="M2 622.50H27.75" stroke="#e2e2e2" stroke-width="1"/><path d="M27.75 642.50H1579.5" stroke="#e2e2e2" stroke-width="1"/><path d="M2 642.50H27.75" stroke="#e2e2e2" stroke-width="1"/><path d="M27.75 662.50H1579.5" stroke="#e2e2e2" stroke-width="1"/><path d="M2 662.50H27.75" stroke="#e2e2e2" stroke-width="1"/><path d="M27.75 682.50H1579.5" stroke="#e2e2e2" stroke-width="1"/><path d="M2 682.50H27.75" stroke="#e2e2e2" stroke-width="1"/><path d="M27.75 702.50H1579.5" stroke="#e2e2e2" stroke-width="1"/><path d="M2 702.50H27.75" stroke="#e2e2e2" stroke-width="1"/><path d="M27.75 722.50H1579.5" stroke="#e2e2e2" stroke-width="1"/><path d="M2 722.50H27.75" stroke="#e2e2e2" stroke-width="1"/><path d="M27.75 742.50H1579.5" stroke="#e2e2e2" stroke-width="1"/><path d="M2 742.50H27.75" stroke="#e2e2e2" stroke-width="1"/><path d="M27.75 202.5H1579.5" stroke="#c6c6c6" stroke-width="1"/><path d="M27.75 202.5V761.5" stroke="#c6c6c6" stroke-width="1"/><path d="M1579.5 202.5V761.5" stroke="#d0d0d0" stroke-width="1"/><path d="M0 761.5H1579.5" stroke="#c6c6c6" stroke-width="1"/><path d="M25 186.600V199H12.600z" fill="#d4d4d4"/></svg>
<div class="t" style="left:56.80px;top:184.60px;font-size:13.5px;line-height:16px;color:#3a3a3a;">A</div>
<div class="t" style="left:123.50px;top:184.60px;font-size:13.5px;line-height:16px;color:#3a3a3a;">B</div>
<div class="t" style="left:189.83px;top:184.60px;font-size:13.5px;line-height:16px;color:#3a3a3a;">C</div>
<div class="t" style="left:256.53px;top:184.60px;font-size:13.5px;line-height:16px;color:#3a3a3a;">D</div>
<div class="t" style="left:323.60px;top:184.60px;font-size:13.5px;line-height:16px;color:#3a3a3a;">E</div>
<div class="t" style="left:390.68px;top:184.60px;font-size:13.5px;line-height:16px;color:#3a3a3a;">F</div>
<div class="t" style="left:456.25px;top:184.60px;font-size:13.5px;line-height:16px;color:#3a3a3a;">G</div>
<div class="t" style="left:523.33px;top:184.60px;font-size:13.5px;line-height:16px;color:#3a3a3a;">H</div>
<div class="t" style="left:593.02px;top:184.60px;font-size:13.5px;line-height:16px;color:#3a3a3a;">I</div>
<div class="t" style="left:658.23px;top:184.60px;font-size:13.5px;line-height:16px;color:#3a3a3a;">J</div>
<div class="t" style="left:723.80px;top:184.60px;font-size:13.5px;line-height:16px;color:#3a3a3a;">K</div>
<div class="t" style="left:791.25px;top:184.60px;font-size:13.5px;line-height:16px;color:#3a3a3a;">L</div>
<div class="t" style="left:856.08px;top:184.60px;font-size:13.5px;line-height:16px;color:#3a3a3a;">M</div>
<div class="t" style="left:923.53px;top:184.60px;font-size:13.5px;line-height:16px;color:#3a3a3a;">N</div>
<div class="t" style="left:989.85px;top:184.60px;font-size:13.5px;line-height:16px;color:#3a3a3a;">O</div>
<div class="t" style="left:1057.30px;top:184.60px;font-size:13.5px;line-height:16px;color:#3a3a3a;">P</div>
<div class="t" style="left:1123.25px;top:184.60px;font-size:13.5px;line-height:16px;color:#3a3a3a;">Q</div>
<div class="t" style="left:1190.33px;top:184.60px;font-size:13.5px;line-height:16px;color:#3a3a3a;">R</div>
<div class="t" style="left:1257.40px;top:184.60px;font-size:13.5px;line-height:16px;color:#3a3a3a;">S</div>
<div class="t" style="left:1324.48px;top:184.60px;font-size:13.5px;line-height:16px;color:#3a3a3a;">T</div>
<div class="t" style="left:1390.43px;top:184.60px;font-size:13.5px;line-height:16px;color:#3a3a3a;">U</div>
<div class="t" style="left:1457.50px;top:184.60px;font-size:13.5px;line-height:16px;color:#3a3a3a;">V</div>
<div class="t" style="left:1522.33px;top:184.60px;font-size:13.5px;line-height:16px;color:#3a3a3a;">W</div>
<div class="t" style="left:10.65px;top:204.60px;font-size:14.5px;line-height:17px;color:#444;transform:scaleX(0.88);transform-origin:0 50%;">1</div>
<div class="t" style="left:10.65px;top:224.60px;font-size:14.5px;line-height:17px;color:#444;transform:scaleX(0.88);transform-origin:0 50%;">2</div>
<div class="t" style="left:10.65px;top:244.60px;font-size:14.5px;line-height:17px;color:#444;transform:scaleX(0.88);transform-origin:0 50%;">3</div>
<div class="t" style="left:10.65px;top:264.60px;font-size:14.5px;line-height:17px;color:#444;transform:scaleX(0.88);transform-origin:0 50%;">4</div>
<div class="t" style="left:10.65px;top:284.60px;font-size:14.5px;line-height:17px;color:#444;transform:scaleX(0.88);transform-origin:0 50%;">5</div>
<div class="t" style="left:10.65px;top:304.60px;font-size:14.5px;line-height:17px;color:#444;transform:scaleX(0.88);transform-origin:0 50%;">6</div>
<div class="t" style="left:10.65px;top:324.60px;font-size:14.5px;line-height:17px;color:#444;transform:scaleX(0.88);transform-origin:0 50%;">7</div>
<div class="t" style="left:10.65px;top:344.60px;font-size:14.5px;line-height:17px;color:#444;transform:scaleX(0.88);transform-origin:0 50%;">8</div>
<div class="t" style="left:10.65px;top:364.60px;font-size:14.5px;line-height:17px;color:#444;transform:scaleX(0.88);transform-origin:0 50%;">9</div>
<div class="t" style="left:7.10px;top:384.60px;font-size:14.5px;line-height:17px;color:#444;letter-spacing:0.005px;transform:scaleX(0.88);transform-origin:0 50%;">10</div>
<div class="t" style="left:7.10px;top:404.60px;font-size:14.5px;line-height:17px;color:#444;letter-spacing:0.543px;transform:scaleX(0.88);transform-origin:0 50%;">11</div>
<div class="t" style="left:7.10px;top:424.60px;font-size:14.5px;line-height:17px;color:#444;letter-spacing:0.005px;transform:scaleX(0.88);transform-origin:0 50%;">12</div>
<div class="t" style="left:7.10px;top:444.60px;font-size:14.5px;line-height:17px;color:#444;letter-spacing:0.005px;transform:scaleX(0.88);transform-origin:0 50%;">13</div>
<div class="t" style="left:7.10px;top:464.60px;font-size:14.5px;line-height:17px;color:#444;letter-spacing:0.005px;transform:scaleX(0.88);transform-origin:0 50%;">14</div>
<div class="t" style="left:7.10px;top:484.60px;font-size:14.5px;line-height:17px;color:#444;letter-spacing:0.005px;transform:scaleX(0.88);transform-origin:0 50%;">15</div>
<div class="t" style="left:7.10px;top:504.60px;font-size:14.5px;line-height:17px;color:#444;letter-spacing:0.005px;transform:scaleX(0.88);transform-origin:0 50%;">16</div>
<div class="t" style="left:7.10px;top:524.60px;font-size:14.5px;line-height:17px;color:#444;letter-spacing:0.005px;transform:scaleX(0.88);transform-origin:0 50%;">17</div>
<div class="t" style="left:7.10px;top:544.60px;font-size:14.5px;line-height:17px;color:#444;letter-spacing:0.005px;transform:scaleX(0.88);transform-origin:0 50%;">18</div>
<div class="t" style="left:7.10px;top:564.60px;font-size:14.5px;line-height:17px;color:#444;letter-spacing:0.005px;transform:scaleX(0.88);transform-origin:0 50%;">19</div>
<div class="t" style="left:7.10px;top:584.60px;font-size:14.5px;line-height:17px;color:#444;letter-spacing:0.005px;transform:scaleX(0.88);transform-origin:0 50%;">20</div>
<div class="t" style="left:7.10px;top:604.60px;font-size:14.5px;line-height:17px;color:#444;letter-spacing:0.005px;transform:scaleX(0.88);transform-origin:0 50%;">21</div>
<div class="t" style="left:7.10px;top:624.60px;font-size:14.5px;line-height:17px;color:#444;letter-spacing:0.005px;transform:scaleX(0.88);transform-origin:0 50%;">22</div>
<div class="t" style="left:7.10px;top:644.60px;font-size:14.5px;line-height:17px;color:#444;letter-spacing:0.005px;transform:scaleX(0.88);transform-origin:0 50%;">23</div>
<div class="t" style="left:7.10px;top:664.60px;font-size:14.5px;line-height:17px;color:#444;letter-spacing:0.005px;transform:scaleX(0.88);transform-origin:0 50%;">24</div>
<div class="t" style="left:7.10px;top:684.60px;font-size:14.5px;line-height:17px;color:#444;letter-spacing:0.005px;transform:scaleX(0.88);transform-origin:0 50%;">25</div>
<div class="t" style="left:7.10px;top:704.60px;font-size:14.5px;line-height:17px;color:#444;letter-spacing:0.005px;transform:scaleX(0.88);transform-origin:0 50%;">26</div>
<div class="t" style="left:7.10px;top:724.60px;font-size:14.5px;line-height:17px;color:#444;letter-spacing:0.005px;transform:scaleX(0.88);transform-origin:0 50%;">27</div>
<div class="t" style="left:7.10px;top:744.60px;font-size:14.5px;line-height:17px;color:#444;letter-spacing:0.005px;transform:scaleX(0.88);transform-origin:0 50%;">28</div>
<div class="b" style="left:1582px;top:183px;width:16.6px;height:580.5px;background:#f4f4f4;border-radius:8px;"></div>
<svg class="b" style="left:1585.5px;top:187px;" width="10" height="8" viewBox="0 0 10 8" fill="none"><path d="M5 0.5L9.700 7.500H0.300z" fill="#757575"/></svg>
<div class="b" style="left:1586.2px;top:200px;width:8.8px;height:523.5px;background:#727471;border-radius:4.4px;"></div>
<svg class="b" style="left:1585.5px;top:751px;" width="10" height="8" viewBox="0 0 10 8" fill="none"><path d="M5 7.5L9.700 0.500H0.300z" fill="#757575"/></svg>
<svg class="b" style="left:0px;top:0px;" width="1600" height="812" viewBox="0 0 1600 812" fill="none"><rect x="434" y="245.5" width="662" height="452.5" fill="#fff" stroke="#878787" stroke-width="1"/><path d="M434 245.5H1096M434 698H1096" stroke="#666" stroke-width="1"/><path d="M485 295.2H1079.500" stroke="#d9d9d9" stroke-width="1"/><path d="M485 369.2H1079.500" stroke="#d9d9d9" stroke-width="1"/><path d="M485 443.1H1079.500" stroke="#d9d9d9" stroke-width="1"/><path d="M485 517.1H1079.500" stroke="#d9d9d9" stroke-width="1"/><path d="M485 590.6H1079.500" stroke="#d9d9d9" stroke-width="1"/><path d="M485 664.2H1079.500" stroke="#d9d9d9" stroke-width="1"/><rect x="502.00" y="517" width="15.2" height="147.00" fill="#4472c4"/><rect x="551.55" y="509.5" width="15.2" height="154.50" fill="#4472c4"/><rect x="601.10" y="493.7" width="15.2" height="170.30" fill="#4472c4"/><rect x="650.65" y="488" width="15.2" height="176.00" fill="#4472c4"/><rect x="700.20" y="481" width="15.2" height="183.00" fill="#4472c4"/><rect x="749.75" y="473" width="15.2" height="191.00" fill="#4472c4"/><rect x="799.30" y="465" width="15.2" height="199.00" fill="#4472c4"/><rect x="848.85" y="443.7" width="15.2" height="220.30" fill="#4472c4"/><rect x="898.40" y="428.4" width="15.2" height="235.60" fill="#4472c4"/><rect x="947.95" y="401" width="15.2" height="263.00" fill="#4472c4"/><rect x="997.50" y="384.5" width="15.2" height="279.50" fill="#4472c4"/><rect x="1047.05" y="366" width="15.2" height="298.00" fill="#4472c4"/></svg>
<div class="t" style="left:672.00px;top:257.80px;font-size:17.5px;line-height:21px;color:#595959;letter-spacing:0.285px;">Population of the Town</div>
<div class="t" style="left:442.50px;top:289.00px;font-size:10.5px;line-height:13px;color:#595959;letter-spacing:0.301px;">25000</div>
<div class="t" style="left:442.50px;top:363.00px;font-size:10.5px;line-height:13px;color:#595959;letter-spacing:0.301px;">20000</div>
<div class="t" style="left:442.50px;top:436.90px;font-size:10.5px;line-height:13px;color:#595959;letter-spacing:0.301px;">15000</div>
<div class="t" style="left:442.50px;top:510.90px;font-size:10.5px;line-height:13px;color:#595959;letter-spacing:0.301px;">10000</div>
<div class="t" style="left:448.70px;top:584.40px;font-size:10.5px;line-height:13px;color:#595959;letter-spacing:0.286px;">5000</div>
<div class="t" style="left:467.36px;top:658.00px;font-size:10.5px;line-height:13px;color:#595959;">0</div>
<div class="t" style="left:497.15px;top:674.50px;font-size:10.5px;line-height:13px;color:#595959;letter-spacing:0.536px;">2010</div>
<div class="t" style="left:546.70px;top:674.50px;font-size:10.5px;line-height:13px;color:#595959;letter-spacing:0.731px;">2011</div>
<div class="t" style="left:596.25px;top:674.50px;font-size:10.5px;line-height:13px;color:#595959;letter-spacing:0.536px;">2012</div>
<div class="t" style="left:645.80px;top:674.50px;font-size:10.5px;line-height:13px;color:#595959;letter-spacing:0.536px;">2013</div>
<div class="t" style="left:695.35px;top:674.50px;font-size:10.5px;line-height:13px;color:#595959;letter-spacing:0.536px;">2014</div>
<div class="t" style="left:744.90px;top:674.50px;font-size:10.5px;line-height:13px;color:#595959;letter-spacing:0.536px;">2015</div>
<div class="t" style="left:794.45px;top:674.50px;font-size:10.5px;line-height:13px;color:#595959;letter-spacing:0.536px;">2016</div>
<div class="t" style="left:844.00px;top:674.50px;font-size:10.5px;line-height:13px;color:#595959;letter-spacing:0.536px;">2017</div>
<div class="t" style="left:893.55px;top:674.50px;font-size:10.5px;line-height:13px;color:#595959;letter-spacing:0.536px;">2018</div>
<div class="t" style="left:943.10px;top:674.50px;font-size:10.5px;line-height:13px;color:#595959;letter-spacing:0.536px;">2019</div>
<div class="t" style="left:992.65px;top:674.50px;font-size:10.5px;line-height:13px;color:#595959;letter-spacing:0.536px;">2020</div>
<div class="t" style="left:1042.20px;top:674.50px;font-size:10.5px;line-height:13px;color:#595959;letter-spacing:0.536px;">2021</div>
<div class="b" style="left:869.8px;top:429.2px;width:61.4px;height:20.4px;background:#fbfbfb;border:1px solid #e6e6e6;border-radius:2.5px;box-shadow:1.5px 1.5px 1.5px rgba(0,0,0,0.42);"></div>
<div class="t" style="left:875.50px;top:432.80px;font-size:12px;line-height:14px;color:#5a5a5a;letter-spacing:0.089px;">Plot Area</div>
<svg class="b" style="left:0px;top:0px;" width="1600" height="812" viewBox="0 0 1600 812" fill="none"><circle cx="434.3" cy="245.7" r="4.6" fill="#fff" stroke="#404040" stroke-width="1.5"/><circle cx="765.3" cy="245.7" r="4.6" fill="#fff" stroke="#404040" stroke-width="1.5"/><circle cx="1096.3" cy="245.7" r="4.6" fill="#fff" stroke="#404040" stroke-width="1.5"/><circle cx="434.3" cy="471.7" r="4.6" fill="#fff" stroke="#404040" stroke-width="1.5"/><circle cx="1096.3" cy="471.7" r="4.6" fill="#fff" stroke="#404040" stroke-width="1.5"/><circle cx="434.3" cy="698.2" r="4.6" fill="#fff" stroke="#404040" stroke-width="1.5"/><circle cx="765.3" cy="698.2" r="4.6" fill="#fff" stroke="#404040" stroke-width="1.5"/><circle cx="1096.3" cy="698.2" r="4.6" fill="#fff" stroke="#404040" stroke-width="1.5"/></svg>
<div class="b" style="left:1107px;top:244.2px;width:29.3px;height:29.3px;background:#fff;border:1px solid #8a8a8a;"></div>
<div class="b" style="left:1107px;top:283.4px;width:29.3px;height:29.3px;background:#fff;border:1px solid #8a8a8a;"></div>
<div class="b" style="left:1107px;top:322.2px;width:29.3px;height:29.3px;background:#fff;border:1px solid #8a8a8a;"></div>
<svg class="b" style="left:1106.9px;top:243.5px;" width="28.5" height="29" viewBox="0 0 28.5 29" fill="none"><path d="M14.200 6.500v16M6.200 14.500h16" stroke="#555" stroke-width="1.1"/></svg>
<svg class="b" style="left:1106.5px;top:282.4px;" width="28.5" height="29" viewBox="0 0 28.5 29" fill="none"><path d="M22 7.200c.8.600.7 1.500.1 2.100l-7.600 8-2-1.700 7.500-8.200c.6-.6 1.400-.7 2-.2z" fill="#fff" stroke="#3b3b3b" stroke-width="1.1"/><path d="M12.300 15.900l2 1.700c-.6 2.500-3.800 4.300-9.600 4.100 3-.9 3.800-2.500 4.400-4 .6-1.300 1.900-2.100 3.200-1.800z" fill="#4472c4"/></svg>
<svg class="b" style="left:1106.2px;top:321.2px;" width="28.5" height="29" viewBox="0 0 28.5 29" fill="none"><path d="M6.100 7.800h17.200l-6.400 8.900v8h-4.400v-8z" stroke="#444" stroke-width="1.2" stroke-linejoin="round"/></svg>
<div class="b" style="left:13px;top:762px;width:384px;height:22.5px;background:#f0f0f0;"></div>
<svg class="b" style="left:20px;top:767px;" width="40" height="12" viewBox="0 0 40 12" fill="none"><path d="M8 2L3.500 6 8 10z" fill="#c4c4c4"/><path d="M27 2l4.500 4-4.500 4z" fill="#c4c4c4"/></svg>
<div class="b" style="left:86.6px;top:762px;width:261.2px;height:21.5px;background:#f1f1f1;box-shadow:0 1px 1px rgba(0,0,0,0.18);"></div>
<div class="b" style="left:217px;top:762px;width:66px;height:22px;background:#fff;"></div>
<div class="b" style="left:217px;top:781.2px;width:66px;height:1.8px;background:#2b6447;"></div>
<svg class="b" style="left:0px;top:0px;" width="1600" height="812" viewBox="0 0 1600 812" fill="none"><path d="M86.6 763V783" stroke="#c8c8c8" stroke-width="1.2"/><path d="M151.7 763V783" stroke="#c8c8c8" stroke-width="1.2"/><path d="M217 763V783" stroke="#c8c8c8" stroke-width="1.2"/><path d="M282.8 763V783" stroke="#c8c8c8" stroke-width="1.2"/><path d="M347.8 763V783" stroke="#c8c8c8" stroke-width="1.2"/><path d="M86.600 783.500H217M283 783.500H348" stroke="#d8d8d8" stroke-width="1"/></svg>
<div class="t" style="left:97.00px;top:761.10px;font-size:15px;line-height:18px;color:#555;letter-spacing:-0.066px;transform:scaleX(0.93);transform-origin:0 50%;">Chart1</div>
<div class="t" style="left:161.60px;top:761.10px;font-size:15px;line-height:18px;color:#555;letter-spacing:-0.217px;transform:scaleX(0.93);transform-origin:0 50%;">Sheet1</div>
<div class="t" style="left:227.00px;top:761.10px;font-size:15px;line-height:18px;color:#1e6e42;letter-spacing:-0.133px;font-weight:bold;transform:scaleX(0.93);transform-origin:0 50%;">Sheet3</div>
<div class="t" style="left:293.80px;top:761.10px;font-size:15px;line-height:18px;color:#555;letter-spacing:-0.217px;transform:scaleX(0.93);transform-origin:0 50%;">Sheet2</div>
<svg class="b" style="left:376px;top:765px;" width="17" height="17" viewBox="0 0 17 17" fill="none"><circle cx="8.4" cy="8.4" r="7.5" stroke="#444" stroke-width="1"/><path d="M8.400 4.400v8M4.400 8.400h8" stroke="#444" stroke-width="1"/></svg>
<div class="b" style="left:957.9px;top:768.5999999999999px;width:2.4px;height:2.4px;background:#1a1a1a;border-radius:0.6px;"></div>
<div class="b" style="left:957.9px;top:772.8px;width:2.4px;height:2.4px;background:#1a1a1a;border-radius:0.6px;"></div>
<div class="b" style="left:957.9px;top:777.0px;width:2.4px;height:2.4px;background:#1a1a1a;border-radius:0.6px;"></div>
<div class="b" style="left:972px;top:764px;width:609.5px;height:17px;background:#f5f5f5;border-radius:8.5px;"></div>
<svg class="b" style="left:976px;top:767.6px;" width="8" height="10" viewBox="0 0 8 10" fill="none"><path d="M0.500 5L7.500 0.300v9.400z" fill="#757575"/></svg>
<div class="b" style="left:989px;top:768px;width:548.5px;height:8.8px;background:#727471;border-radius:4.4px;"></div>
<svg class="b" style="left:1569px;top:767.6px;" width="8" height="10" viewBox="0 0 8 10" fill="none"><path d="M7.500 5L0.500 0.300v9.400z" fill="#757575"/></svg>
<div class="b" style="left:0px;top:784.5px;width:1600px;height:23px;background:#f3f3f3;"></div>
<div class="b" style="left:0px;top:807px;width:1600px;height:1px;background:#fafafa;"></div>
<div class="b" style="left:0px;top:807.5px;width:1600px;height:5px;background:#1f1f1f;border-top:1px solid #000;"></div>
<div class="t" style="left:7.80px;top:790.80px;font-size:11px;line-height:13px;color:#444;letter-spacing:-0.459px;">Ready</div>
<svg class="b" style="left:57.5px;top:790px;" width="16" height="16" viewBox="0 0 16 16" fill="none"><path d="M1.500 1.600h13.300v2.700H1.500zM1.500 4.300v8.600h4.300" stroke="#333" stroke-width="1.2"/><circle cx="10.900" cy="9.500" r="4" stroke="#333" stroke-width="1.2" fill="#f3f3f3"/><circle cx="10.900" cy="9.500" r="1.700" fill="#222"/><path d="M3.300 7h2.200M3.300 9.600h2" stroke="#333" stroke-width="1.100"/></svg>
<svg class="b" style="left:91.5px;top:789px;" width="16" height="16" viewBox="0 0 16 16" fill="none"><circle cx="6.700" cy="2.800" r="1.700" stroke="#333" stroke-width="1" fill="none"/><path d="M1.300 4.600c1.600.900 3.400 1.300 5.400 1.300s3.800-.400 5.400-1.300l.5 1.300c-1.200.700-2.500 1.100-3.800 1.300l.2 2.500-1.300.4-.5-2h-1l-1.800 5.900-1.500-.5 1.500-5.900-.1-.4c-1.300-.200-2.600-.600-3.800-1.300z" stroke="#333" stroke-width="0.900" fill="none" stroke-linejoin="round"/><path d="M9.600 10.300l4.800 4.600M14.400 10.300l-4.800 4.600" stroke="#333" stroke-width="1.100"/></svg>
<div class="t" style="left:110.30px;top:790.80px;font-size:11px;line-height:13px;color:#444;letter-spacing:-0.200px;">Accessibility: Investigate</div>
<div class="b" style="left:1291px;top:786px;width:41.5px;height:20.5px;background:#dedede;"></div>
<svg class="b" style="left:1304px;top:789.5px;" width="14" height="14" viewBox="0 0 14 14" fill="none"><path d="M0.600 0.600h12.800v12.800H0.600zM4.900 0.600v12.800M9.100 0.600v12.800M0.600 4.900h12.800M0.600 9.100h12.800" stroke="#333" stroke-width="1.1"/></svg>
<svg class="b" style="left:1346px;top:789.5px;" width="14" height="14" viewBox="0 0 14 14" fill="none"><path d="M0.600 0.600h12.800v12.800H0.600z" stroke="#333" stroke-width="1.1"/><path d="M3.400 3.200h7.200v7.600H3.400zM5 5.400h4M5 7h4M5 8.600h4" stroke="#333" stroke-width="1"/></svg>
<svg class="b" style="left:1387.5px;top:789.5px;" width="14" height="14" viewBox="0 0 14 14" fill="none"><path d="M0.600 0.600h12.800v12.800H0.600zM4.600 0.600v6.600h4.600V0.600M0.600 7.200h4" stroke="#333" stroke-width="1.1"/></svg>
<svg class="b" style="left:1420px;top:790px;" width="180" height="14" viewBox="0 0 180 14" fill="none"><path d="M2 7h7" stroke="#444" stroke-width="1"/><path d="M15 7h104" stroke="#777" stroke-width="1"/><rect x="65.500" y="1.500" width="4" height="11" fill="#666"/><path d="M123.500 7h8M127.500 3v8" stroke="#444" stroke-width="1"/></svg>
<div class="t" style="left:1566.50px;top:790.80px;font-size:11px;line-height:13px;color:#444;letter-spacing:-0.658px;">100%</div>
</body></html>
